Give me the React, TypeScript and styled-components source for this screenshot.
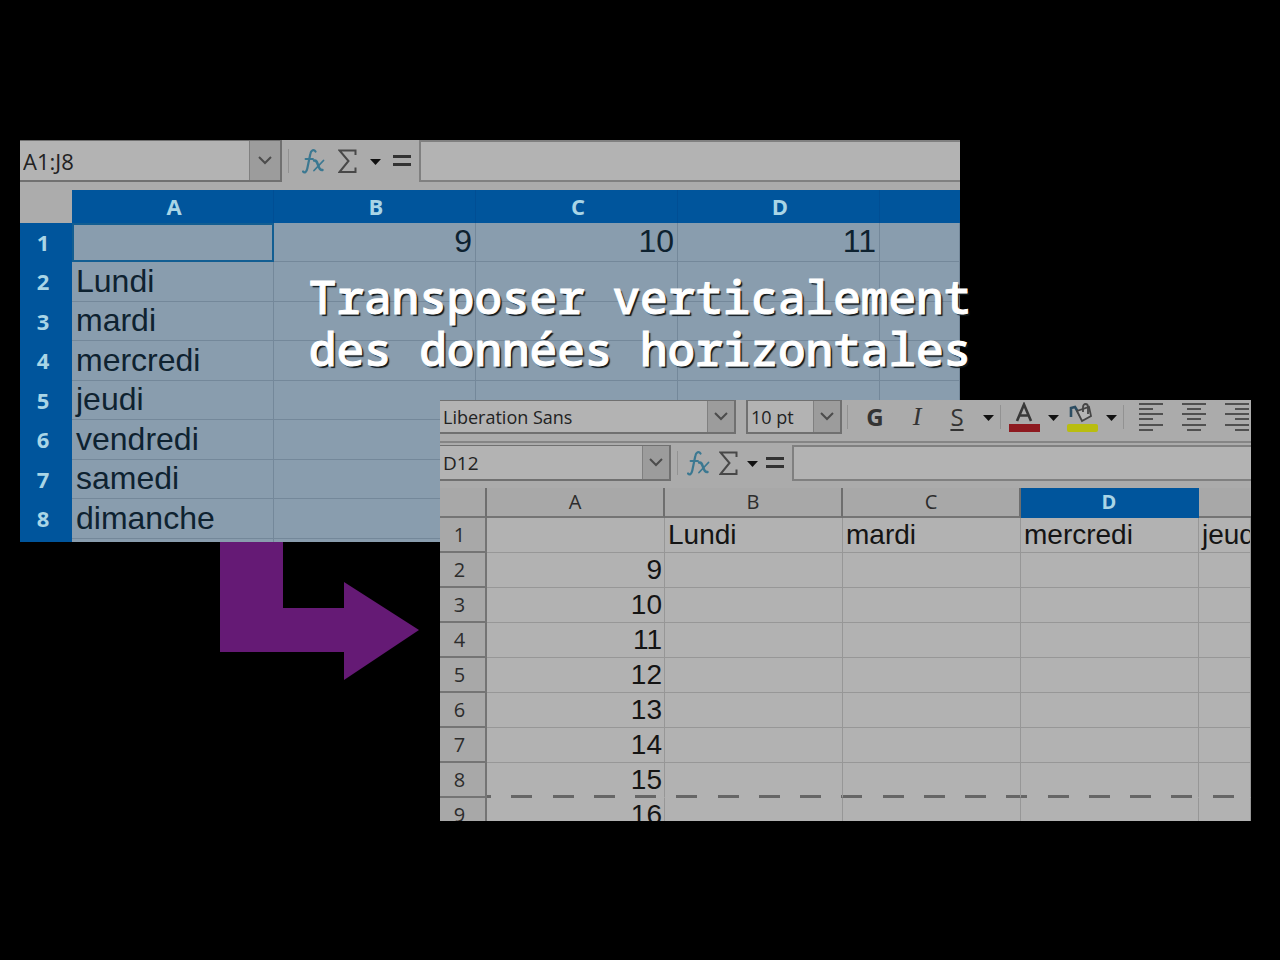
import React from "react";
import styled, { createGlobalStyle, css } from "styled-components";

const ui = '"Open Sans", "Noto Sans", sans-serif';
const cellFont = '"Liberation Sans", Arial, sans-serif';

const GlobalStyle = createGlobalStyle`
  *, *::before, *::after { box-sizing: border-box; }
  body { margin: 0; background: #000; }
  button, input, select { margin: 0; padding: 0; border: 0; border-radius: 0; font: inherit; color: inherit; background: none; }
  svg { display: block; }
`;

const Slide = styled.main`
  display: grid;
  grid-template-columns: 20px 420px minmax(0, 520fr) minmax(0, 291fr) 29px;
  grid-template-rows: 140px 260px 142px auto;
  min-height: 100vh;
  align-items: start;
  align-content: start;
  overflow: hidden;
`;

const Sheet = styled.section<{ $target?: boolean }>`
  grid-column: ${(p) => (p.$target ? "3 / 5" : "2 / 4")};
  grid-row: ${(p) => (p.$target ? "3 / 5" : "2 / 4")};
  height: ${(p) => (p.$target ? "421px" : "402px")};
  overflow: hidden;
  background: #ababab;
  color: #222;
  font-family: ${ui};
`;

const Title = styled.h1`
  grid-column: 1 / -1;
  grid-row: 2;
  z-index: 1;
  margin: 130px 0 0;
  text-align: center;
  font: 500 46px/52px "Noto Sans Mono", "DejaVu Sans Mono", monospace;
  color: #fff;
  -webkit-text-stroke: 1px #fff;
  text-shadow: 2px 2px 1px #10181c;
`;

const Arrow = styled.svg`
  grid-column: 2;
  grid-row: 4;
  margin-left: 200px;
`;

const Bar = styled.div<{ $h: number; $line?: boolean }>`
  display: flex;
  align-items: flex-start;
  height: ${(p) => p.$h}px;
  ${(p) => p.$line && "border-bottom: 2px solid #858585;"}
`;

const Combo = styled.div<{ $w: number; $h: number; $arrow: number; $left?: boolean; $size: number }>`
  flex: none;
  display: grid;
  grid-template-columns: minmax(0, 1fr) ${(p) => p.$arrow}px;
  width: ${(p) => p.$w}px;
  height: ${(p) => p.$h}px;
  background: #b3b3b3;
  border: solid #707070;
  border-width: 1px 2px 2px ${(p) => (p.$left ? 2 : 0)}px;
  font-size: ${(p) => p.$size}px;

  input, select {
    grid-area: 1 / 1;
    min-width: 0;
    height: 100%;
    padding-left: 3px;
    outline: 0;
    appearance: none;
  }
  select { grid-column: 1 / 3; }
`;

const arrowBox = css`
  grid-area: 1 / 2;
  display: grid;
  place-items: center;
  background: #9c9c9c;
  border-left: 1px solid #808080;
`;
const ArrowButton = styled.button`
  && { ${arrowBox} }
`;
const ArrowMark = styled.span`
  ${arrowBox}
  pointer-events: none;
`;

const Tools = styled.div<{ $gap: number; $left: number; $right: number; $h: number }>`
  flex: none;
  display: flex;
  align-items: center;
  gap: ${(p) => p.$gap}px;
  padding: 0 ${(p) => p.$right}px 0 ${(p) => p.$left}px;
  height: ${(p) => p.$h}px;
`;

const Tool = styled.button<{ $w: number; $look?: string }>`
  flex: none;
  display: grid;
  place-items: center;
  width: ${(p) => p.$w}px;
  height: 32px;
  && {
    color: #333;
    font-size: 24px;
    line-height: 28px;
    ${(p) => p.$look === "bold" && "font-weight: 700;"}
    ${(p) => p.$look === "italic" && 'font-family: "Liberation Serif", serif; font-size: 26px; font-style: italic;'}
    ${(p) => p.$look === "underline" && "text-decoration: underline; text-decoration-thickness: 2px; text-underline-offset: 3px;"}
  }
`;

const Separator = styled.span`
  flex: none;
  width: 1px;
  height: 24px;
  background: #929292;
`;

const Formula = styled.input<{ $h: number }>`
  flex: 1;
  min-width: 0;
  && {
    height: ${(p) => p.$h}px;
    background: #b3b3b3;
    border: solid #808080;
    border-width: 2px 0 2px 2px;
  }
`;

const Grid = styled.table<{ $sel?: boolean }>`
  width: 100%;
  table-layout: fixed;
  border-collapse: separate;
  border-spacing: 0;
  white-space: nowrap;

  th, td { padding: 0; overflow: hidden; }
  thead th {
    height: ${(p) => (p.$sel ? 33 : 30)}px;
    ${(p) => (p.$sel ? "padding: 0 0 2px 3px;" : "")}
    border-right: ${(p) => (p.$sel ? "1px solid #004e94" : "2px solid #6e6e6e")};
    border-bottom: ${(p) => (p.$sel ? "0" : "2px solid #747474")};
  }
  th {
    font-size: ${(p) => (p.$sel ? 22 : 20)}px;
    line-height: 28px;
    font-weight: ${(p) => (p.$sel ? 700 : 400)};
    color: ${(p) => (p.$sel ? "#a9d5e6" : "#2c2c2c")};
    background: ${(p) => (p.$sel ? "#00559c" : "#a8a8a8")};
  }
  thead th:last-child { border-right: 0; }
  tbody th {
    padding: 0 6px ${(p) => (p.$sel ? 2 : 0)}px 0;
    border-right: ${(p) => (p.$sel ? "0" : "2px solid #747474")};
    border-bottom: ${(p) => (p.$sel ? "0" : "2px solid #747474")};
  }
  td {
    border-right: 1px solid ${(p) => (p.$sel ? "#74889a" : "#979797")};
    border-bottom: 1px solid ${(p) => (p.$sel ? "#74889a" : "#979797")};
    font-family: ${cellFont};
    font-size: ${(p) => (p.$sel ? 32 : 28)}px;
    line-height: ${(p) => (p.$sel ? 36 : 32)}px;
    color: ${(p) => (p.$sel ? "#0e2230" : "#141414")};
    background: ${(p) => (p.$sel ? "#899dae" : "transparent")};
    padding: ${(p) => (p.$sel ? "0 3px 2px 4px" : "0 2px 1px 3px")};
  }
  tbody { background: #b2b2b2; }
  tbody tr { height: ${(p) => (p.$sel ? 39 : 35)}px; }
  ${(p) => p.$sel && "tbody tr:nth-child(even) { height: 40px; }"}
  && thead th.corner {
    background: ${(p) => (p.$sel ? "#acacac" : "#a8a8a8")};
    ${(p) => p.$sel && "border-right: 0;"}
  }
  && thead th.active { background: #00559c; border-color: #00559c; color: #a9d5e6; font-weight: 700; }
  && td.cursor { border: 2px solid #125e92; }
`;

const PageBreakRow = styled.tr`
  background: linear-gradient(90deg, #666 21px, transparent 21px 41px, #666 41px 62px, transparent 62px 83px,
    #666 83px 104px, transparent 104px 124px, #666 124px 145px, transparent 145px) 30px 100% / 165px 3px repeat-x;
  td { border-bottom-color: transparent; }
`;

const Value = styled.td<{ $num?: boolean }>`
  text-align: ${(p) => (p.$num ? "right" : "left")};
`;

const Chevron = () => (
  <svg width="14" height="9" viewBox="0 0 14 9" fill="none" stroke="#4c4c4c" strokeWidth="2">
    <path d="M1 1l6 6 6-6" />
  </svg>
);
const Caret = () => (
  <svg width="11" height="7" viewBox="0 0 11 7" fill="#111"><path d="M0 1h11L5.500 7z" /></svg>
);
const FxIcon = () => (
  <svg width="23" height="27" viewBox="0 0 23 27" fill="none" stroke="#3b7891" strokeLinecap="round">
    <path d="M13.500 3.500C12 1 9 2 8.300 6L5.300 20.500C4.600 24 2.700 25.500 1 23.500" strokeWidth="2.200" />
    <path d="M3.500 11h7.500" strokeWidth="1.800" />
    <path d="M12 12.500c2.500-.5 3 1.500 4 4.500s2 5.500 4.500 5" strokeWidth="2.400" />
    <path d="M21.500 12.500L12 22.500" strokeWidth="1.800" />
  </svg>
);
const SigmaIcon = () => (
  <svg width="19" height="25" viewBox="0 0 19 25" fill="none" stroke="#484848" strokeWidth="2">
    <path d="M17.500 6V1.500H1.500L10.500 12 1.500 23H17.500V18.500" />
  </svg>
);
const EqualIcon = () => (
  <svg width="18" height="14" viewBox="0 0 18 14" fill="#333"><path d="M0 1h18v3H0zM0 9h18v3H0z" /></svg>
);
const FontColorIcon = () => (
  <svg width="32" height="30" viewBox="0 0 32 30">
    <path d="M9 19L16 2.500 23 19M11.500 13.500h9" fill="none" stroke="#383838" strokeWidth="2.600" />
    <rect x="1" y="22" width="31" height="8" fill="#8e1a20" />
  </svg>
);
const HighlightIcon = () => (
  <svg width="32" height="30" viewBox="0 0 32 30" fill="none">
    <path d="M5 15V6l4-1 8 13" stroke="#2c4d62" strokeWidth="2.600" />
    <path d="M11 9l5 10 9-5-2-9z" fill="#b5b5b5" stroke="#454545" strokeWidth="1.800" />
    <path d="M17 10V5c0-4 5-4 5 0v7" stroke="#454545" strokeWidth="1.800" />
    <rect x="1" y="22" width="31" height="8" rx="2" fill="#b9bd10" />
  </svg>
);
const AlignIcon = ({ at }: { at: number }) => (
  <svg width="24" height="28" viewBox="0 0 24 28" fill="#505050">
    {[0, 5, 10, 15, 21, 26].map((y, i) => {
      const w = i % 2 ? 14 : 24;
      return <rect key={y} x={((24 - w) * at) / 2} y={y} width={w} height="2" />;
    })}
  </svg>
);

const FormulaTools = ({ gap, h }: { gap: number; h: number }) => (
  <Tools $gap={gap} $left={6} $right={8} $h={h}>
    <Separator />
    <Tool $w={24} aria-label="Assistant Fonctions"><FxIcon /></Tool>
    <Tool $w={20} aria-label="Somme"><SigmaIcon /></Tool>
    <Tool $w={12} aria-label="Choisir une fonction"><Caret /></Tool>
    <Tool $w={18} aria-label="Formule"><EqualIcon /></Tool>
  </Tools>
);

const days = ["Lundi", "mardi", "mercredi", "jeudi", "vendredi", "samedi", "dimanche"];
const letters = ["A", "B", "C", "D", ""];
const sourceRows = [["", "9", "10", "11", ""], ...days.map((d) => [d, "", "", "", ""])];
const targetRows = [
  ["", "Lundi", "mardi", "mercredi", "jeudi"],
  ...[9, 10, 11, 12, 13, 14, 15, 16].map((n) => [String(n), "", "", "", ""]),
];

const Cells = ({ values }: { values: string[] }) => (
  <>{values.map((v, i) => <Value key={i} $num={/^\d/.test(v)}>{v}</Value>)}</>
);

const Columns = ({ head, col }: { head: number; col: number }) => (
  <colgroup>
    <col style={{ width: head }} />
    {[0, 1, 2, 3].map((i) => <col key={i} style={{ width: col }} />)}
    <col />
  </colgroup>
);

export default function App() {
  return (
    <>
      <GlobalStyle />
      <Slide>
        <Sheet>
          <Bar $h={50}>
            <Combo $w={262} $h={42} $arrow={31} $size={22}>
              <input aria-label="Zone de nom" defaultValue="A1:J8" />
              <ArrowButton aria-label="Ouvrir la liste"><Chevron /></ArrowButton>
            </Combo>
            <FormulaTools gap={12} h={42} />
            <Formula $h={42} aria-label="Ligne de saisie" />
          </Bar>
          <Grid $sel>
            <Columns head={52} col={202} />
            <thead>
              <tr>
                <th className="corner" />
                {letters.map((l, i) => <th key={i} scope="col">{l}</th>)}
              </tr>
            </thead>
            <tbody>
              {sourceRows.map((row, r) => (
                <tr key={r}>
                  <th scope="row">{r + 1}</th>
                  {r === 0 ? (
                    <>
                      <td className="cursor" />
                      <Cells values={row.slice(1)} />
                    </>
                  ) : (
                    <Cells values={row} />
                  )}
                </tr>
              ))}
              <tr>
                <th />
                <Cells values={["", "", "", "", ""]} />
              </tr>
            </tbody>
          </Grid>
        </Sheet>

        <Title>Transposer verticalement<br />des données horizontales</Title>

        <Arrow width="200" height="138" viewBox="0 0 200 138" fill="#651a75">
          <path d="M0 0H63V66H124V40L199 88 124 138V110H0z" />
        </Arrow>

        <Sheet $target>
          <Bar $h={43} $line>
            <Combo $w={296} $h={34} $arrow={27} $size={18}>
              <select aria-label="Nom de police"><option>Liberation Sans</option></select>
              <ArrowMark><Chevron /></ArrowMark>
            </Combo>
            <Tools $gap={0} $left={5} $right={5} $h={34} />
            <Combo $w={96} $h={34} $arrow={27} $size={18} $left>
              <select aria-label="Taille de police"><option>10 pt</option></select>
              <ArrowMark><Chevron /></ArrowMark>
            </Combo>
            <Tools $gap={6} $left={5} $right={5} $h={34}>
              <Separator />
              <Tool $w={42} $look="bold">G</Tool>
              <Tool $w={30} $look="italic">I</Tool>
              <Tool $w={38} $look="underline">S</Tool>
              <Tool $w={12} aria-label="Options de soulignement"><Caret /></Tool>
              <Separator />
              <Tool $w={34} aria-label="Couleur de police"><FontColorIcon /></Tool>
              <Tool $w={12} aria-label="Choisir la couleur de police"><Caret /></Tool>
              <Tool $w={34} aria-label="Surlignage"><HighlightIcon /></Tool>
              <Tool $w={12} aria-label="Choisir la couleur de surlignage"><Caret /></Tool>
              <Separator />
            </Tools>
            <Tools $gap={19} $left={10} $right={10} $h={34}>
              <Tool $w={24} aria-label="Aligner à gauche"><AlignIcon at={0} /></Tool>
              <Tool $w={24} aria-label="Centrer"><AlignIcon at={1} /></Tool>
              <Tool $w={24} aria-label="Aligner à droite"><AlignIcon at={2} /></Tool>
            </Tools>
          </Bar>
          <Bar $h={2} />
          <Bar $h={43}>
            <Combo $w={231} $h={36} $arrow={27} $size={19}>
              <input aria-label="Zone de nom" defaultValue="D12" />
              <ArrowButton aria-label="Ouvrir la liste"><Chevron /></ArrowButton>
            </Combo>
            <FormulaTools gap={8} h={36} />
            <Formula $h={36} aria-label="Ligne de saisie" />
          </Bar>
          <Grid>
            <Columns head={47} col={178} />
            <thead>
              <tr>
                <th className="corner" />
                {letters.map((l, i) => (
                  <th key={i} scope="col" className={l === "D" ? "active" : undefined}>{l}</th>
                ))}
              </tr>
            </thead>
            <tbody>
              {targetRows.map((row, r) => {
                const Row = r === 7 ? PageBreakRow : "tr";
                return (
                  <Row key={r}>
                    <th scope="row">{r + 1}</th>
                    <Cells values={row} />
                  </Row>
                );
              })}
            </tbody>
          </Grid>
        </Sheet>
      </Slide>
    </>
  );
}
